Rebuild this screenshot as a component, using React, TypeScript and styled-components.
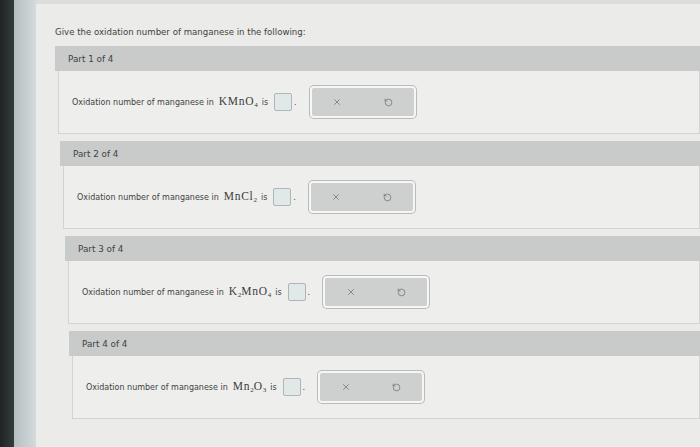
import styled, { createGlobalStyle } from "styled-components";
import { X, RotateCcw } from "lucide-react";

const GlobalStyle = createGlobalStyle`
  html, body {
    margin: 0;
    padding: 0;
    background: #e9e9e7;
  }
  body {
    font-family: "DejaVu Sans", Verdana, sans-serif;
    color: #3f4242;
  }
`;

const Screen = styled.div`
  display: flex;
  width: 700px;
  height: 447px;
  overflow: hidden;
`;

const Bezel = styled.div`
  width: 14px;
  background: linear-gradient(90deg, #1f2323, #363b3b);
`;

const SideStrip = styled.div`
  width: 22px;
  background: linear-gradient(90deg, #b4bec1, #d5dadb);
`;

const Page = styled.div`
  flex: 1;
  display: flex;
  flex-direction: column;
  border-top: 4px solid #dcdcda;
  padding: 22px 0 0 19px;
  background: #ebebe9;
`;

const Prompt = styled.div`
  font-size: 8.6px;
  line-height: 12px;
  margin-bottom: 8px;
`;

const Part = styled.section<{ $shift: number }>`
  display: flex;
  flex-direction: column;
  margin-left: ${(p) => p.$shift}px;
  margin-bottom: 7px;
`;

const PartHeader = styled.div`
  height: 25px;
  display: flex;
  align-items: center;
  padding-left: 13px;
  background: #c8cbca;
  font-size: 8.8px;
`;

const PartBody = styled.div`
  height: 62px;
  display: flex;
  align-items: center;
  margin-left: 3px;
  padding-left: 13px;
  background: #eeeeec;
  border: 1px solid #d3d4d2;
  border-top: none;
`;

const Question = styled.div`
  display: flex;
  align-items: center;
  font-size: 8px;
`;

const Formula = styled.span`
  font-family: "Liberation Serif", "Times New Roman", serif;
  font-size: 11.5px;
  margin: 0 4px 0 5px;
  color: #3a3d3d;
  letter-spacing: 0.7px;

  sub {
    font-size: 7px;
    vertical-align: -2px;
    letter-spacing: 0;
  }
`;

const AnswerBox = styled.span`
  display: inline-block;
  width: 16px;
  height: 16px;
  margin-left: 6px;
  background: #e1e8e8;
  border: 1px solid #aeb6b6;
  border-radius: 2px;
`;

const Dot = styled.span`
  margin-left: 2px;
  font-size: 8px;
`;

const ToolGroup = styled.div`
  display: flex;
  width: 102px;
  height: 28px;
  margin-left: 13px;
  background: #cdd0cf;
  border: 2px solid #f6f6f4;
  border-radius: 4px;
  box-shadow: 0 0 0 1px #b8bbba;
`;

const ToolButton = styled.div`
  flex: 1;
  display: flex;
  align-items: center;
  justify-content: center;
  color: #555a5a;
`;

const parts = [
  { shift: 0, formula: ["KMnO", "4", ""] },
  { shift: 5, formula: ["MnCl", "2", ""] },
  { shift: 10, formula: ["K", "2", "MnO", "4"] },
  { shift: 14, formula: ["Mn", "2", "O", "3"] },
];

function FormulaText({ bits }: { bits: string[] }) {
  return (
    <Formula>
      {bits.map((b, i) =>
        i % 2 === 1 ? <sub key={i}>{b}</sub> : <span key={i}>{b}</span>
      )}
    </Formula>
  );
}

export default function App() {
  return (
    <>
      <GlobalStyle />
      <Screen>
        <Bezel />
        <SideStrip />
        <Page>
          <Prompt>Give the oxidation number of manganese in the following:</Prompt>
          {parts.map((part, i) => (
            <Part key={i} $shift={part.shift}>
              <PartHeader>
                Part {i + 1} of {parts.length}
              </PartHeader>
              <PartBody>
                <Question>
                  Oxidation number of manganese in
                  <FormulaText bits={part.formula} />
                  is
                  <AnswerBox />
                  <Dot>.</Dot>
                </Question>
                <ToolGroup>
                  <ToolButton>
                    <X size={10} strokeWidth={1.4} />
                  </ToolButton>
                  <ToolButton>
                    <RotateCcw size={9} strokeWidth={1.6} />
                  </ToolButton>
                </ToolGroup>
              </PartBody>
            </Part>
          ))}
        </Page>
      </Screen>
    </>
  );
}
